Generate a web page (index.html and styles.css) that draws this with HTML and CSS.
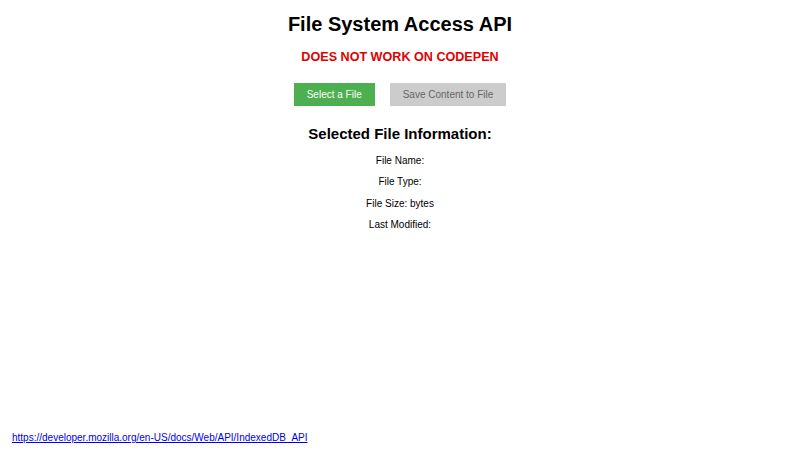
FILE: index.html
```html
<!DOCTYPE html>
<html lang="en">
<head>
  <meta charset="UTF-8">
  <meta name="viewport" content="width=device-width, initial-scale=1.0">
  <title>File System Access API</title>
  <link rel="stylesheet" href="styles.css">
</head>
<body>
  <main class="page">
    <h1>File System Access API</h1>
    <p class="warning">DOES NOT WORK ON CODEPEN</p>

    <div class="actions">
      <button class="btn btn-select" id="select-btn">Select a File</button>
      <button class="btn btn-save" id="save-btn" disabled>Save Content to File</button>
    </div>

    <h2>Selected File Information:</h2>
    <p class="info">File Name: <span id="file-name"></span></p>
    <p class="info">File Type: <span id="file-type"></span></p>
    <p class="info">File Size: <span id="file-size"></span> bytes</p>
    <p class="info">Last Modified: <span id="file-modified"></span></p>
  </main>

  <footer class="footer">
    <a href="https://developer.mozilla.org/en-US/docs/Web/API/IndexedDB_API">https://developer.mozilla.org/en-US/docs/Web/API/IndexedDB_API</a>
  </footer>
</body>
</html>
```

FILE: styles.css
```css
html, body {
  height: 100%;
}

body {
  margin: 0;
  padding: 0 12px;
  font-family: 'Liberation Sans', Arial, sans-serif;
  font-size: 10px;
  color: #000;
  background: #fff;
  display: flex;
  flex-direction: column;
  box-sizing: border-box;
}

.page {
  text-align: center;
}

h1 {
  font-size: 20px;
  margin: 12px 0 0;
  line-height: 24px;
}

.warning {
  color: #e00000;
  font-weight: bold;
  font-size: 12.6px;
  margin: 13px 0 0;
  line-height: 16px;
}

.actions {
  display: flex;
  justify-content: center;
  gap: 15px;
  margin-top: 18px;
}

.btn {
  font-family: inherit;
  font-size: 10px;
  border: none;
  height: 23px;
  padding: 0 13px;
  cursor: pointer;
}

.btn-select {
  background: #4caf50;
  color: #fff;
}

.btn-save {
  background: #cccccc;
  color: #666;
  cursor: not-allowed;
}

h2 {
  font-size: 15px;
  margin: 18px 0 0;
  line-height: 20px;
}

.info {
  margin: 0;
  line-height: 21.3px;
}

h2 + .info {
  margin-top: 6px;
}

.footer {
  margin-top: auto;
  padding-bottom: 7px;
}

.footer a {
  color: #00e;
}
```
